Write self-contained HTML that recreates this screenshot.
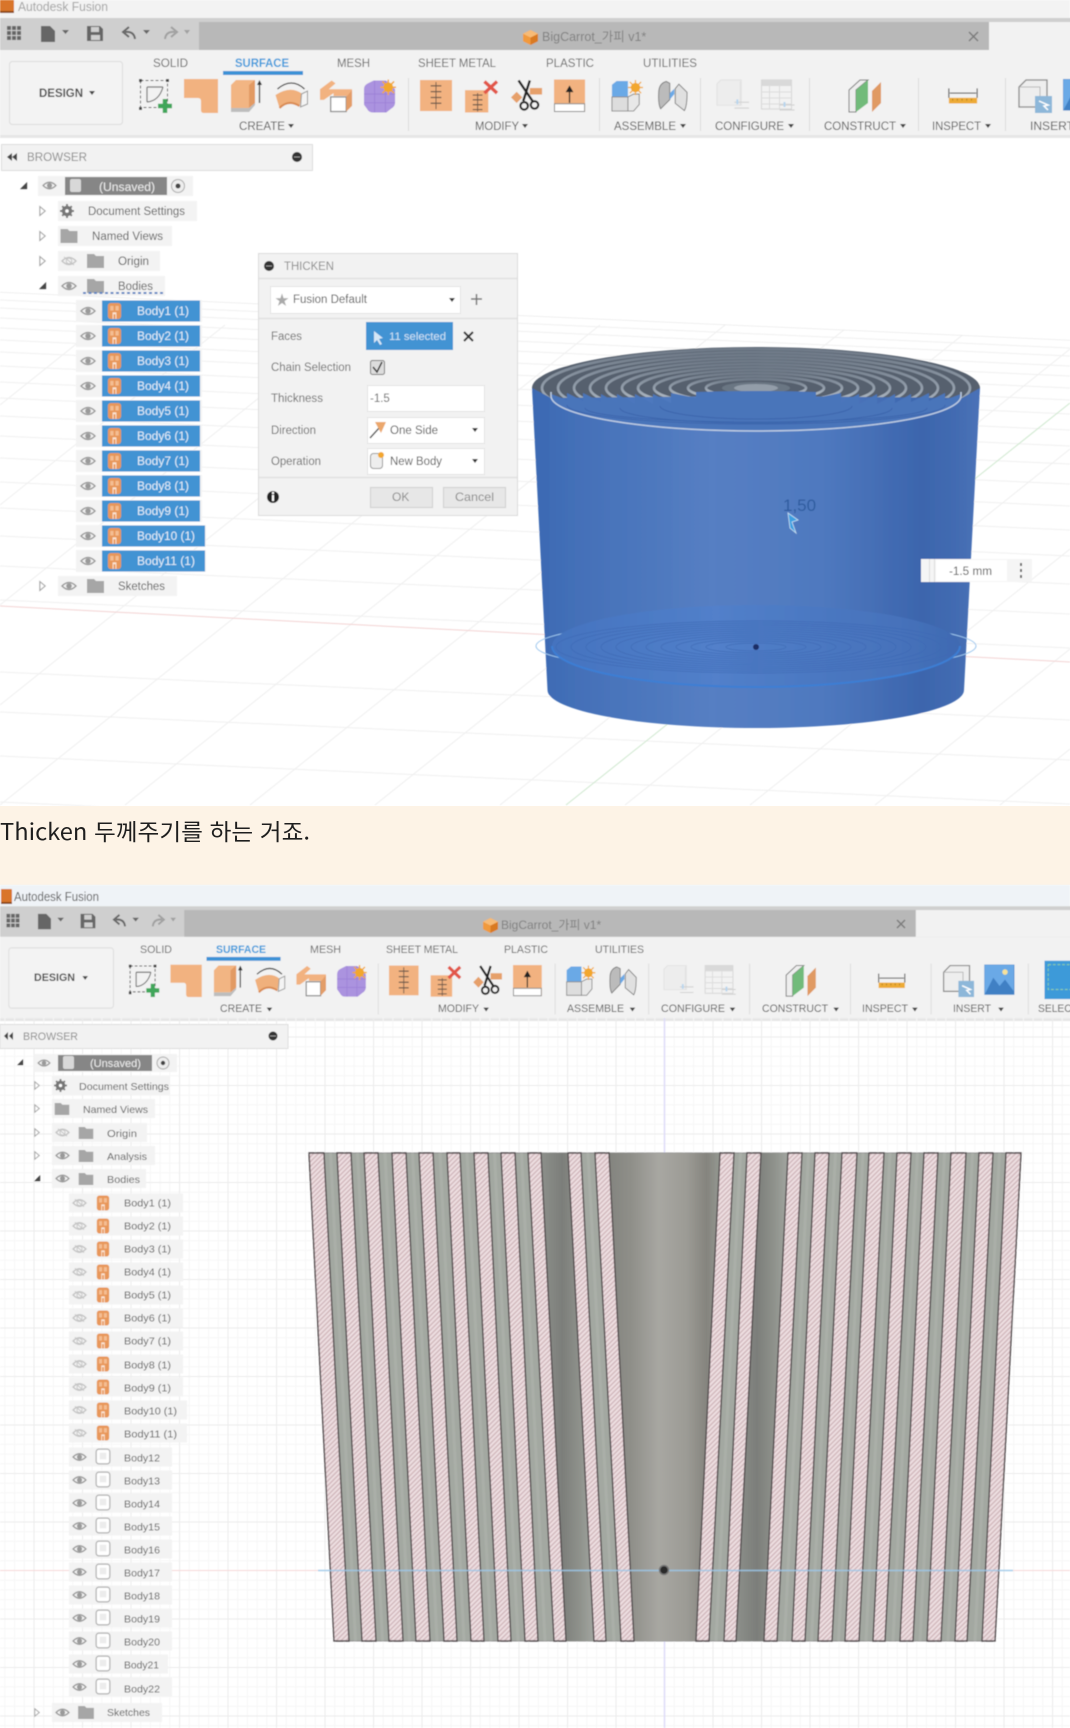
<!DOCTYPE html>
<html lang="ko"><head><meta charset="utf-8"><title>Thicken</title>
<style>
html,body{margin:0;padding:0;background:#fff;width:1070px;height:1728px;overflow:hidden}
svg{display:block}
text{font-family:"Liberation Sans","Noto Sans CJK KR",sans-serif;fill:#666;font-size:12px}
.tab{fill:#686868}.blue{fill:#3a9bdc;font-weight:bold}.grp{fill:#5a5a5a}.w{fill:#e4f0fa;font-size:11.5px}
.tr{fill:#5a5a5a;font-size:11.5px}.dlg{fill:#6c6c6c;font-size:11.5px}.g2{fill:#5a5a5a;font-size:10.5px}
</style></head><body>
<svg xmlns="http://www.w3.org/2000/svg" width="1070" height="1728" viewBox="0 0 1070 1728">
<defs>
<filter id="b" filterUnits="userSpaceOnUse" x="0" y="0" width="1070" height="1728"><feGaussianBlur stdDeviation="0.65"/></filter>
<clipPath id="ground"><path d="M0 292L1070 340V806H0Z"/></clipPath>
<clipPath id="s1"><rect width="1070" height="806"/></clipPath>
<clipPath id="s2"><rect y="1018" width="1070" height="710"/></clipPath>
<clipPath id="topg"><path d="M532 388A224 41 0 0 1 980 388L962 398L756 396L551 398Z"/></clipPath>
<linearGradient id="cy" x1="0" x2="1" y1="0" y2="0"><stop offset="0" stop-color="#3b69b3"/><stop offset=".1" stop-color="#4470b8"/><stop offset=".4" stop-color="#567fc3"/><stop offset=".65" stop-color="#4f79bf"/><stop offset=".87" stop-color="#3c65ad"/><stop offset=".95" stop-color="#436cb2"/><stop offset="1" stop-color="#4a72b8"/></linearGradient>
<linearGradient id="cy2" x1="0" x2="1" y1="0" y2="0"><stop offset="0" stop-color="#4473bf"/><stop offset=".4" stop-color="#5280ca"/><stop offset=".85" stop-color="#4672bb"/><stop offset="1" stop-color="#3f6ab2"/></linearGradient>
<linearGradient id="ring" x1="0" x2="0" y1="0" y2="1"><stop offset="0" stop-color="#6f7a88"/><stop offset=".5" stop-color="#939eab"/><stop offset="1" stop-color="#cad2da"/></linearGradient>
<linearGradient id="gap" x1="0" x2="1" y1="0" y2="0"><stop offset="0" stop-color="#8d908b"/><stop offset=".4" stop-color="#7c7e7a"/><stop offset=".75" stop-color="#90938d"/><stop offset="1" stop-color="#a2a6a0"/></linearGradient>
<linearGradient id="bore" x1="0" x2="1" y1="0" y2="0"><stop offset="0" stop-color="#83847f"/><stop offset=".2" stop-color="#8f8f89"/><stop offset=".45" stop-color="#a8a7a2"/><stop offset=".7" stop-color="#9c9b95"/><stop offset=".88" stop-color="#85847e"/><stop offset="1" stop-color="#959992"/></linearGradient>
<pattern id="hatch" width="3.4" height="3.4" patternUnits="userSpaceOnUse" patternTransform="rotate(-45)"><rect width="3.4" height="3.4" fill="#e6d3d6"/><rect width="3.4" height="1" fill="#cdb3b8"/><rect y="1.7" width="3.4" height=".8" fill="#f3e8ea"/></pattern>
<pattern id="gmin" x="664" y="1570" width="9.7" height="9.7" patternUnits="userSpaceOnUse"><path d="M0 .5H9.7M.5 0V9.7" stroke="#f6f6f6" fill="none"/></pattern>
<pattern id="gmaj" x="664" y="1570" width="48.5" height="48.5" patternUnits="userSpaceOnUse"><path d="M0 .5H48.5M.5 0V48.5" stroke="#ebebeb" fill="none"/></pattern>

<symbol id="sk" viewBox="0 0 34 34"><rect x="1.5" y="1.5" width="27" height="27" fill="none" stroke="#555" stroke-dasharray="3 2"/><path d="M8 8H24M8 8V23M8 23Q20 22 24 8" fill="none" stroke="#777" stroke-width="1.2"/><rect y="0" width="3" height="3" fill="#444"/><rect x="27" width="3" height="3" fill="#444"/><rect y="28" width="3" height="3" fill="#444"/><path d="M26 20V34M19 27H33" stroke="#3fa65a" stroke-width="4.5"/></symbol>
<symbol id="su" viewBox="0 0 34 34"><path d="M0 0H34V34H20Q17 34 17 31V22Q17 19 14 19H0Z" fill="#f2b280"/></symbol>
<symbol id="ex" viewBox="0 0 34 34"><path d="M1 6L6 1H25V24L19 29H1Z" fill="#f2b583"/><path d="M19 6L25 1V24L19 29Z" fill="#e29a64"/><path d="M1 29H19L25 24V26L19 33H1Z" fill="#bdbdbd"/><path d="M29.500 4V24" stroke="#444" stroke-width="1.300"/><path d="M27 6L29.500 1L32 6Z" fill="#333"/></symbol>
<symbol id="sw" viewBox="0 0 34 34"><path d="M3 10Q17 -2 30 10" fill="none" stroke="#444" stroke-width="1.300"/><path d="M1 16Q16 6 28 15L25 27Q14 20 5 29Z" fill="#f0b07c"/><path d="M5 29Q14 20 25 27" fill="none" stroke="#d98b52" stroke-width="2"/><path d="M27 15L33 12V25L26 28Z" fill="#f4f4f4" stroke="#999"/></symbol>
<symbol id="pa" viewBox="0 0 34 34"><path d="M0 10L12 1L16 4L9 10H33V27L27 33V17H14V14L4 21H0Z" fill="#f2b280"/><rect x="11" y="18" width="16" height="15" fill="#fff" stroke="#8a8a8a" stroke-width="1.300"/><path d="M27 18L33 11V27L27 33Z" fill="#e39d68"/></symbol>
<symbol id="pu" viewBox="0 0 34 34"><path d="M10 1H20Q24 1 27 4L32 10V24Q32 28 28 30L23 34H9Q5 34 3 30L0 26V10Q0 6 4 4Z" fill="#ab93df"/><path d="M0 15H32M0 24H32M11 1V34M22 1V34" stroke="#9b80d6" stroke-width=".8"/><circle cx="25" cy="8" r="5" fill="#f2a72e"/><path d="M25 0V16M17 8H33M19 2L31 14M31 2L19 14" stroke="#f2a72e" stroke-width="1.500"/></symbol>
<symbol id="m1" viewBox="0 0 34 34"><rect width="33" height="32" fill="#f2b280"/><path d="M11 6H22M11 12H22M11 18H22M11 24H22" stroke="#6e5a4c" stroke-width="1.300"/><path d="M16.500 2V30" stroke="#6e5a4c" stroke-width="1"/></symbol>
<symbol id="m2" viewBox="0 0 34 34"><rect y="11" width="24" height="23" fill="#f2b280"/><path d="M8 16H18M8 21H18M8 26H18M8 31H18" stroke="#6e5a4c" stroke-width="1.200"/><path d="M13 14V33" stroke="#6e5a4c"/><path d="M20 2L33 14M33 2L20 14" stroke="#e2574a" stroke-width="3.500"/></symbol>
<symbol id="sc" viewBox="0 0 34 34"><path d="M0 19L6 13L12 19L6 25Z" fill="#e6a06a"/><rect x="20" y="9" width="13" height="7" fill="#e6a06a"/><path d="M8 1L23 23M20 1L13 23" stroke="#222" stroke-width="2.600"/><circle cx="25" cy="27" r="4" fill="none" stroke="#222" stroke-width="2.300"/><circle cx="14" cy="28" r="4" fill="none" stroke="#222" stroke-width="2.300"/></symbol>
<symbol id="th" viewBox="0 0 34 34"><rect width="32" height="33" fill="#f2b280"/><rect x=".5" y="25" width="31" height="8" fill="#fff" stroke="#888"/><path d="M16 8V24" stroke="#222" stroke-width="1.300"/><path d="M12 13L16 6L20 13Z" fill="#222"/></symbol>
<symbol id="a1" viewBox="0 0 34 34"><path d="M1 5L6 1H18V18H1Z" fill="#6aa9e6"/><path d="M1 18H18V33H1Z" fill="#ddd" stroke="#888"/><path d="M18 18L24 15H30V26L24 33H18Z" fill="#e8e8e8" stroke="#888"/><circle cx="26" cy="8" r="5" fill="#f2a72e"/><path d="M26 0V16M18 8H34M20 2L32 14M32 2L20 14" stroke="#f2a72e" stroke-width="1.300"/></symbol>
<symbol id="a2" viewBox="0 0 34 34"><path d="M2 11Q3 3 10 1L14 3V21L4 31Q1 26 2 11Z" fill="#bbb" stroke="#777"/><path d="M33 13L24 4L20 9V25L30 33Q33 28 33 13Z" fill="#e0e0e0" stroke="#777"/><path d="M14 14L19 9V15L14 21Z" fill="#6aa9e6"/></symbol>
<symbol id="c1" viewBox="0 0 34 34"><path d="M1 5L5 1H26V27H1Z" fill="#ededed" stroke="#e2e2e2"/><path d="M25 2V27" stroke="#e0e0e0"/><path d="M19 24H34M19 30H34" stroke="#cfcfcf"/><path d="M22 21V26" stroke="#b7d5ee" stroke-width="2"/></symbol>
<symbol id="c2" viewBox="0 0 34 34"><rect x="1" y="1" width="30" height="29" fill="#f2f2f2" stroke="#d6d6d6"/><rect x="1" y="1" width="30" height="6" fill="#d9d9d9"/><path d="M1 13H31M1 19H31M1 25H31M9 7V30M19 7V30" stroke="#dcdcdc"/><path d="M19 26H34M19 31H34" stroke="#cfcfcf"/><path d="M24 23V28" stroke="#b7d5ee" stroke-width="2"/></symbol>
<symbol id="co" viewBox="0 0 34 34"><path d="M1 11L12 1H20V1L8 11V33H1Z" fill="#eee" stroke="#777"/><path d="M8 11L20 1V24L8 33Z" fill="#71bb7a"/><path d="M24 12L33 3V24L24 33Z" fill="#e09a64"/></symbol>
<symbol id="in" viewBox="0 0 34 34"><path d="M2 10V20M32 10V20M3 15H31" stroke="#555" stroke-width="1.200"/><rect x="2" y="20" width="30" height="6" fill="#edab35"/><path d="M6 21V23M11 21V23M16 21V23M21 21V23M26 21V23" stroke="#b07e22"/></symbol>
<symbol id="i1" viewBox="0 0 34 34"><path d="M1 8L8 1H29V28H1Z" fill="#eee" stroke="#888" stroke-width="1.300"/><path d="M1 8H22V28" fill="none" stroke="#aaa" stroke-width=".8"/><rect x="17" y="17" width="17" height="17" fill="#8db7d9"/><path d="M21 22L30 26L26 27L30 31" stroke="#fff" stroke-width="1.500" fill="none"/></symbol>
<symbol id="i2" viewBox="0 0 34 34"><rect width="33" height="32" fill="#6aa9e6" stroke="#4d8fcf"/><path d="M1 31L10 14L17 23L23 16L33 29V32H1Z" fill="#3f80c4"/><circle cx="23" cy="8" r="3" fill="#f6e29a"/></symbol>

<symbol id="eye" viewBox="-8 -6 16 12"><path d="M-7 0Q0 -7 7 0Q0 7 -7 0Z" fill="none" stroke="#9a9a9a" stroke-width="1.500"/><circle r="2.800" fill="#9a9a9a"/></symbol>
<symbol id="eyo" viewBox="-8 -6 16 12"><path d="M-7 0Q0 -7 7 0Q0 7 -7 0Z" fill="none" stroke="#c4c4c4" stroke-width="1.500"/><circle r="2.800" fill="none" stroke="#c4c4c4"/><path d="M-5 -4L5 4" stroke="#c4c4c4"/></symbol>
<symbol id="body" viewBox="0 0 14 17"><rect width="14" height="17" rx="3" fill="#e8975a"/><path d="M5 17V10H9V17H8V12H6V17Z" fill="#fbe6d6"/><path d="M2.500 3H6V8H2.500ZM8 3H11.500V8H8Z" fill="#f4bd92"/></symbol>
<symbol id="bw" viewBox="0 0 16 17"><rect x=".7" y=".7" width="14.600" height="15.600" rx="3" fill="#fff" stroke="#b0b0b0" stroke-width="1.300"/><rect x="4.500" y="4.500" width="7" height="7" fill="#ececec"/></symbol>
<symbol id="fold" viewBox="0 0 17 14"><path d="M0 0H7L9 2H17V14H0Z" fill="#a6a6a6"/></symbol>
<symbol id="gear" viewBox="-8 -8 16 16"><circle r="4.500" fill="none" stroke="#777" stroke-width="3"/><path d="M0 -8V8M-8 0H8M-5.500 -5.500L5.500 5.500M5.500 -5.500L-5.500 5.500" stroke="#777" stroke-width="2.200"/><circle r="2" fill="#fff"/></symbol>
<symbol id="tc" viewBox="0 0 8 12"><path d="M1 1L7 6L1 11Z" fill="#fff" stroke="#a5a5a5" stroke-width="1.300"/></symbol>
<symbol id="to" viewBox="0 0 9 9"><path d="M8 0V8H0Z" fill="#444"/></symbol>
<symbol id="cube" viewBox="0 0 14 14"><path d="M7 0L14 3.500V10.500L7 14L0 10.500V3.500Z" fill="#f19a3e"/><path d="M7 7L14 3.500V10.500L7 14Z" fill="#d97a24"/><path d="M0 3.500L7 0L14 3.500L7 7Z" fill="#f7bb77"/></symbol>

<g id="rib">
<rect y="18" width="1160" height="32" fill="#cfcfcf"/>
<rect x="199" y="22" width="790" height="28" fill="#b8b8b8"/>
<rect x="989" y="22" width="171" height="28" fill="#f2f2f2"/>
<rect y="50" width="1160" height="85" fill="#f2f2f2"/>
<rect y="135" width="1160" height="3" fill="#e6e6e6"/>
<g transform="translate(0 -1)">
<path d="M7 27h4v4h-4zM12 27h4v4h-4zM17 27h4v4h-4zM7 32h4v4h-4zM12 32h4v4h-4zM17 32h4v4h-4zM7 37h4v4h-4zM12 37h4v4h-4zM17 37h4v4h-4z" fill="#666"/>
<path d="M41 27H50L55 32V43H41Z" fill="#666"/><path d="M62 31h7l-3.500 4z" fill="#666"/>
<path d="M87 27H100L103 30V42H87Z" fill="#666"/><rect x="91" y="28" width="8" height="5" fill="#cfcfcf"/><rect x="91" y="36" width="9" height="5" fill="#cfcfcf"/>
<path d="M135 40Q134 32 125 33M129 28L123 33L129 38" fill="none" stroke="#666" stroke-width="2"/><path d="M143 31h7l-3.500 4z" fill="#666"/>
<path d="M165 40Q166 32 175 33M171 28L177 33L171 38" fill="none" stroke="#a0a0a0" stroke-width="2"/><path d="M184 31h6l-3 4z" fill="#a0a0a0"/>
</g>
<rect x="223" y="71" width="80" height="4" fill="#3d92d6"/>
<rect x="9.500" y="61.500" width="113" height="63" rx="3" fill="#f3f3f3" stroke="#dcdcdc"/>
<use href="#sk" x="139" y="79" width="34" height="34"/><use href="#su" x="184" y="79" width="34" height="34"/><use href="#ex" x="230" y="79" width="34" height="34"/><use href="#sw" x="274" y="79" width="35" height="34"/><use href="#pa" x="320" y="79" width="33" height="34"/><use href="#pu" x="364" y="79" width="33" height="34"/>
<use href="#m1" x="420" y="80" width="33" height="33"/><use href="#m2" x="465" y="79" width="33" height="34"/><use href="#sc" x="511" y="79" width="32" height="33"/><use href="#th" x="554" y="79" width="33" height="34"/>
<use href="#a1" x="611" y="79" width="32" height="34"/><use href="#a2" x="657" y="80" width="31" height="32"/><use href="#c1" x="716" y="79" width="33" height="33"/><use href="#c2" x="760" y="79" width="35" height="34"/>
<use href="#co" x="848" y="79" width="34" height="34"/><use href="#in" x="947" y="79" width="32" height="32"/><use href="#i1" x="1018" y="79" width="34" height="34"/><use href="#i2" x="1063" y="79" width="33" height="33"/>
<rect x="1128" y="75" width="40" height="40" fill="#3c9ad9"/><rect x="1132" y="79" width="30" height="26" fill="none" stroke="#8fd0a0" stroke-dasharray="3 2"/>
<path d="M408.500 78V131M599.500 78V131M700.500 78V131M809.500 78V131M918.500 78V131M1005.500 78V131M1110.500 78V131" stroke="#dcdcdc"/>
<path d="M89 91h6l-3 4zM288 124h6l-3 4zM522 124h6l-3 4zM680 124h6l-3 4zM788 124h6l-3 4zM900 124h6l-3 4zM985 124h6l-3 4zM1078 124h6l-3 4z" fill="#444"/>
</g>
</defs>

<rect width="1070" height="1728" fill="#fff"/>

<!-- SHOT 1 -->
<g filter="url(#b)" clip-path="url(#s1)">
<rect width="1070" height="18" fill="#f3f3f3"/>
<path d="M0 0H14V13H0Z" fill="#d9752c"/><path d="M0 11H14V13H0Z" fill="#8c4a1a"/>
<text x="18" y="11" style="font-size:13px;fill:#a3a3a3" textLength="90" lengthAdjust="spacingAndGlyphs">Autodesk Fusion</text>
<use href="#rib"/>
<use href="#cube" x="523" y="30" width="15" height="15"/>
<text x="542" y="41" style="font-size:12.500px;fill:#808080">BigCarrot_가피 v1*</text>
<path d="M969 32L978 41M978 32L969 41" stroke="#7c7c7c" stroke-width="1.500"/>
<text class="tab" x="153" y="67" textLength="35" lengthAdjust="spacingAndGlyphs">SOLID</text>
<text class="blue" x="235" y="67" textLength="54" lengthAdjust="spacingAndGlyphs">SURFACE</text>
<text class="tab" x="337" y="67" textLength="33" lengthAdjust="spacingAndGlyphs">MESH</text>
<text class="tab" x="418" y="67" textLength="78" lengthAdjust="spacingAndGlyphs">SHEET METAL</text>
<text class="tab" x="546" y="67" textLength="48" lengthAdjust="spacingAndGlyphs">PLASTIC</text>
<text class="tab" x="643" y="67" textLength="54" lengthAdjust="spacingAndGlyphs">UTILITIES</text>
<text x="39" y="97" style="font-weight:bold;fill:#4a4a4a;font-size:11.500px" textLength="44" lengthAdjust="spacingAndGlyphs">DESIGN</text>
<text class="grp" x="239" y="130" textLength="46" lengthAdjust="spacingAndGlyphs">CREATE</text>
<text class="grp" x="475" y="130" textLength="44" lengthAdjust="spacingAndGlyphs">MODIFY</text>
<text class="grp" x="614" y="130" textLength="62" lengthAdjust="spacingAndGlyphs">ASSEMBLE</text>
<text class="grp" x="715" y="130" textLength="69" lengthAdjust="spacingAndGlyphs">CONFIGURE</text>
<text class="grp" x="824" y="130" textLength="72" lengthAdjust="spacingAndGlyphs">CONSTRUCT</text>
<text class="grp" x="932" y="130" textLength="49" lengthAdjust="spacingAndGlyphs">INSPECT</text>
<text class="grp" x="1030" y="130" textLength="44" lengthAdjust="spacingAndGlyphs">INSERT</text>

<!-- ground grid -->
<g clip-path="url(#ground)" fill="none">
<path d="M0 300L1070 348M0 308L1070 356M0 318L1070 366M0 328L1070 376M0 340L1070 388M0 352L1070 400M0 366L1070 414M0 382L1070 430M0 398L1070 446M0 416L1070 464M0 436L1070 484M0 458L1070 506M0 482L1070 530M0 508L1070 556M0 536L1070 584M0 566L1070 614M0 600L1070 648M0 672L1070 720M0 712L1070 760M0 756L1070 804M0 802L1070 850" stroke="#f0f0f0"/>
<path d="M-500 805L100 325M-375 805L225 325M-250 805L350 325M-125 805L475 325M0 805L600 325M125 805L725 325M250 805L850 325M375 805L975 325M500 805L1100 325M625 805L1225 325M750 805L1350 325M875 805L1475 325M1000 805L1600 325" stroke="#efefef"/>
<path d="M0 606L1070 662" stroke="#f3d3d3"/>
<path d="M1070 403L566 805" stroke="#cfe8cf"/>
<path d="M0 292L1070 340" stroke="#e2e2e2"/>
</g>

<!-- browser -->
<rect x="1.500" y="144.500" width="311" height="26" fill="#f2f2f2" stroke="#dedede"/>
<path d="M12 153V161L7 157ZM17 153V161L12 157Z" fill="#444"/>
<text x="27" y="161" style="fill:#8a8a8a;font-size:12px" textLength="60" lengthAdjust="spacingAndGlyphs">BROWSER</text>
<circle cx="297" cy="157" r="5" fill="#333"/><path d="M294 157H300" stroke="#999"/>

<use href="#to" x="20" y="182" width="8" height="8"/>
<rect x="38" y="176" width="155" height="20" fill="#f3f3f3"/>
<use href="#eye" x="42" y="180" width="15" height="11"/>
<rect x="65" y="177" width="102" height="18" fill="#868686"/><rect x="70" y="179" width="11" height="13" rx="2" fill="#d8d8d8"/>
<text x="99" y="191" style="fill:#eee;font-size:11.500px" textLength="56" lengthAdjust="spacingAndGlyphs">(Unsaved)</text>
<circle cx="178" cy="186" r="6.500" fill="#eee" stroke="#aaa"/><circle cx="178" cy="186" r="2.500" fill="#444"/>

<rect x="58" y="201" width="139" height="20" fill="#f3f3f3"/><use href="#tc" x="39" y="205" width="7" height="12"/><use href="#gear" x="60" y="204" width="14" height="14"/>
<text class="tr" x="88" y="215" textLength="97" lengthAdjust="spacingAndGlyphs">Document Settings</text>
<rect x="58" y="226" width="114" height="20" fill="#f3f3f3"/><use href="#tc" x="39" y="230" width="7" height="12"/><use href="#fold" x="60" y="229" width="18" height="14"/>
<text class="tr" x="92" y="240" textLength="71" lengthAdjust="spacingAndGlyphs">Named Views</text>
<rect x="58" y="251" width="102" height="20" fill="#f3f3f3"/><use href="#tc" x="39" y="255" width="7" height="12"/><use href="#eyo" x="61" y="255" width="16" height="12"/><use href="#fold" x="87" y="254" width="17" height="14"/>
<text class="tr" x="118" y="265" textLength="31" lengthAdjust="spacingAndGlyphs">Origin</text>
<rect x="58" y="276" width="107" height="20" fill="#f3f3f3"/><use href="#to" x="39" y="282" width="8" height="8"/><use href="#eye" x="61" y="280" width="16" height="12"/><use href="#fold" x="87" y="279" width="17" height="14"/>
<text class="tr" x="118" y="290" textLength="35" lengthAdjust="spacingAndGlyphs">Bodies</text>
<path d="M83 293H163" stroke="#5f86c4" stroke-width="2" stroke-dasharray="3 2.500"/>

<g>
<rect x="76" y="300" width="126" height="22" fill="#f3f3f3"/><rect x="76" y="325" width="126" height="22" fill="#f3f3f3"/><rect x="76" y="350" width="126" height="22" fill="#f3f3f3"/><rect x="76" y="375" width="126" height="22" fill="#f3f3f3"/><rect x="76" y="400" width="126" height="22" fill="#f3f3f3"/><rect x="76" y="425" width="126" height="22" fill="#f3f3f3"/><rect x="76" y="450" width="126" height="22" fill="#f3f3f3"/><rect x="76" y="475" width="126" height="22" fill="#f3f3f3"/><rect x="76" y="500" width="126" height="22" fill="#f3f3f3"/><rect x="76" y="525" width="130" height="22" fill="#f3f3f3"/><rect x="76" y="550" width="130" height="22" fill="#f3f3f3"/>
<path d="M102 300.500h98v21h-98zM102 325.500h98v21h-98zM102 350.500h98v21h-98zM102 375.500h98v21h-98zM102 400.500h98v21h-98zM102 425.500h98v21h-98zM102 450.500h98v21h-98zM102 475.500h98v21h-98zM102 500.500h98v21h-98zM102 525.500h103v21h-103zM102 550.500h103v21h-103z" fill="#4393d3"/>
<use href="#eye" x="80" y="305" width="16" height="12"/><use href="#eye" x="80" y="330" width="16" height="12"/><use href="#eye" x="80" y="355" width="16" height="12"/><use href="#eye" x="80" y="380" width="16" height="12"/><use href="#eye" x="80" y="405" width="16" height="12"/><use href="#eye" x="80" y="430" width="16" height="12"/><use href="#eye" x="80" y="455" width="16" height="12"/><use href="#eye" x="80" y="480" width="16" height="12"/><use href="#eye" x="80" y="505" width="16" height="12"/><use href="#eye" x="80" y="530" width="16" height="12"/><use href="#eye" x="80" y="555" width="16" height="12"/>
<use href="#body" x="107" y="303" width="15" height="16"/><use href="#body" x="107" y="328" width="15" height="16"/><use href="#body" x="107" y="353" width="15" height="16"/><use href="#body" x="107" y="378" width="15" height="16"/><use href="#body" x="107" y="403" width="15" height="16"/><use href="#body" x="107" y="428" width="15" height="16"/><use href="#body" x="107" y="453" width="15" height="16"/><use href="#body" x="107" y="478" width="15" height="16"/><use href="#body" x="107" y="503" width="15" height="16"/><use href="#body" x="107" y="528" width="15" height="16"/><use href="#body" x="107" y="553" width="15" height="16"/>
</g>
<text class="w" x="137" y="315" textLength="52" lengthAdjust="spacingAndGlyphs">Body1 (1)</text>
<text class="w" x="137" y="340" textLength="52" lengthAdjust="spacingAndGlyphs">Body2 (1)</text>
<text class="w" x="137" y="365" textLength="52" lengthAdjust="spacingAndGlyphs">Body3 (1)</text>
<text class="w" x="137" y="390" textLength="52" lengthAdjust="spacingAndGlyphs">Body4 (1)</text>
<text class="w" x="137" y="415" textLength="52" lengthAdjust="spacingAndGlyphs">Body5 (1)</text>
<text class="w" x="137" y="440" textLength="52" lengthAdjust="spacingAndGlyphs">Body6 (1)</text>
<text class="w" x="137" y="465" textLength="52" lengthAdjust="spacingAndGlyphs">Body7 (1)</text>
<text class="w" x="137" y="490" textLength="52" lengthAdjust="spacingAndGlyphs">Body8 (1)</text>
<text class="w" x="137" y="515" textLength="52" lengthAdjust="spacingAndGlyphs">Body9 (1)</text>
<text class="w" x="137" y="540" textLength="58" lengthAdjust="spacingAndGlyphs">Body10 (1)</text>
<text class="w" x="137" y="565" textLength="58" lengthAdjust="spacingAndGlyphs">Body11 (1)</text>
<rect x="58" y="576" width="119" height="20" fill="#f3f3f3"/><use href="#tc" x="39" y="580" width="7" height="12"/><use href="#eye" x="61" y="580" width="16" height="12"/><use href="#fold" x="87" y="579" width="17" height="14"/>
<text class="tr" x="118" y="590" textLength="47" lengthAdjust="spacingAndGlyphs">Sketches</text>

<!-- dialog -->
<rect x="258.500" y="253.500" width="259" height="262" fill="#f2f2f2" stroke="#dcdcdc"/>
<path d="M259 278.500H517M259 318.500H517M259 477.500H517" stroke="#e0e0e0" stroke-width="1.500"/>
<circle cx="269" cy="266" r="5" fill="#333"/><path d="M266 266H272" stroke="#999"/>
<text x="284" y="270" style="fill:#8a8a8a;font-size:11.500px" textLength="50" lengthAdjust="spacingAndGlyphs">THICKEN</text>
<rect x="270.500" y="286.500" width="190" height="27" fill="#fff" stroke="#e4e4e4"/>
<text x="275" y="305" style="font-size:14px;fill:#aaa">★</text>
<text class="dlg" x="293" y="303" style="fill:#555" textLength="74" lengthAdjust="spacingAndGlyphs">Fusion Default</text>
<path d="M449 298h6l-3 4z" fill="#333"/><path d="M471 299H482M476.500 294V305" stroke="#777" stroke-width="1.500"/>
<text class="dlg" x="271" y="340" textLength="31" lengthAdjust="spacingAndGlyphs">Faces</text>
<rect x="366" y="322" width="87" height="28" fill="#4393d3"/>
<path d="M374 331V343L377 340L380 345L382 344L379 339L383 338Z" fill="#d4e6f6"/>
<text class="w" x="389" y="340" style="font-size:11px;fill:#cfe4f6" textLength="57" lengthAdjust="spacingAndGlyphs">11 selected</text>
<path d="M464 332L473 341M473 332L464 341" stroke="#333" stroke-width="2"/>
<text class="dlg" x="271" y="371" textLength="80" lengthAdjust="spacingAndGlyphs">Chain Selection</text>
<rect x="370.500" y="360.500" width="14" height="14" rx="2" fill="#ddd" stroke="#777"/><path d="M373 367L377 372L382 362" fill="none" stroke="#333" stroke-width="1.500"/>
<text class="dlg" x="271" y="402" textLength="52" lengthAdjust="spacingAndGlyphs">Thickness</text>
<rect x="367.500" y="385.500" width="117" height="26" fill="#fff" stroke="#e4e4e4"/>
<text x="370" y="402" style="fill:#666;font-size:11.500px">-1.5</text>
<text class="dlg" x="271" y="434" textLength="45" lengthAdjust="spacingAndGlyphs">Direction</text>
<rect x="367.500" y="417.500" width="117" height="26" fill="#fff" stroke="#e4e4e4"/>
<path d="M370 438L380 427" stroke="#555" stroke-width="1.500"/><path d="M375 422H386L381 433Z" fill="#eba76c"/>
<text class="dlg" x="390" y="434" style="fill:#555" textLength="48" lengthAdjust="spacingAndGlyphs">One Side</text>
<path d="M472 428h6l-3 4z" fill="#333"/>
<text class="dlg" x="271" y="465" textLength="50" lengthAdjust="spacingAndGlyphs">Operation</text>
<rect x="367.500" y="448.500" width="117" height="26" fill="#fff" stroke="#e4e4e4"/>
<rect x="370.500" y="453.500" width="12" height="15" rx="3" fill="#eee" stroke="#999"/><circle cx="381" cy="455" r="3" fill="#f2a72e"/>
<text class="dlg" x="390" y="465" style="fill:#555" textLength="52" lengthAdjust="spacingAndGlyphs">New Body</text>
<path d="M472 459h6l-3 4z" fill="#333"/>
<circle cx="273" cy="497" r="6" fill="#222"/><rect x="272" y="495" width="2" height="6" fill="#fff"/><rect x="272" y="492" width="2" height="2" fill="#fff"/>
<rect x="370.500" y="487.500" width="62" height="20" fill="#e7e7e7" stroke="#cfcfcf"/>
<text x="392" y="501" style="fill:#8a8a8a">OK</text>
<rect x="443.500" y="487.500" width="62" height="20" fill="#e7e7e7" stroke="#cfcfcf"/>
<text x="455" y="501" style="fill:#8a8a8a" textLength="39" lengthAdjust="spacingAndGlyphs">Cancel</text>

<!-- cylinder -->
<path d="M532 388L547.500 690A208.250 38 0 0 0 964 690L980 388Z" fill="url(#cy)"/>
<ellipse cx="756" cy="646" rx="220" ry="26" fill="none" stroke="#9cc6ee"/>
<path d="M552 646A204 41 0 0 1 960 646A204 41 0 0 1 552 646Z" fill="url(#cy2)"/>
<path d="M552 646A204 41 0 0 0 960 646" fill="none" stroke="#3e7ed4" stroke-width="2"/>
<g fill="none" stroke="#3f6ab5" stroke-width=".9" opacity=".75">
<ellipse cx="756" cy="647" rx="200" ry="26"/><ellipse cx="756" cy="647" rx="185" ry="24"/><ellipse cx="756" cy="647" rx="170" ry="22"/><ellipse cx="756" cy="647" rx="155" ry="20"/><ellipse cx="756" cy="647" rx="140" ry="18"/><ellipse cx="756" cy="647" rx="125" ry="16"/><ellipse cx="756" cy="647" rx="110" ry="14"/><ellipse cx="756" cy="647" rx="95" ry="12"/><ellipse cx="756" cy="647" rx="80" ry="10"/><ellipse cx="756" cy="647" rx="65" ry="8"/><ellipse cx="756" cy="647" rx="50" ry="6"/><ellipse cx="756" cy="647" rx="30" ry="4"/>
</g>
<circle cx="756" cy="647" r="3" fill="#1e2f66"/>
<g clip-path="url(#topg)">
<rect x="530" y="345" width="452" height="55" fill="#56616e"/>
<g fill="none" stroke="url(#ring)" stroke-width="2.600">
<ellipse cx="756" cy="388" rx="214" ry="39"/><ellipse cx="756" cy="388" rx="198" ry="36"/><ellipse cx="756" cy="388" rx="182" ry="33"/><ellipse cx="756" cy="388" rx="166" ry="30"/><ellipse cx="756" cy="388" rx="150" ry="27"/><ellipse cx="756" cy="388" rx="134" ry="24"/><ellipse cx="756" cy="388" rx="118" ry="21"/><ellipse cx="756" cy="388" rx="102" ry="18"/><ellipse cx="756" cy="388" rx="86" ry="15"/><ellipse cx="756" cy="388" rx="68" ry="12"/><ellipse cx="756" cy="388" rx="50" ry="9"/>
</g>
<ellipse cx="756" cy="388" rx="34" ry="6" fill="#6b7683"/>
<ellipse cx="756" cy="388" rx="22" ry="4" fill="#939da9"/>
</g>
<path d="M551 394L567 400V393L583 401V393L601 402V394L617 403V394L635 404V394L653 404V394L671 403V393L696 398V392Q756 390 816 392V398L841 393V403L859 394V404L877 394V404L895 394V403L911 394V402L929 393V401L945 393V400L961 394V395A205 35 0 0 1 551 395Z" fill="#4a74ba"/>
<g fill="none" stroke="#3a64ab" stroke-width=".8">
<path d="M567 405A189 19 0 0 0 945 405"/><path d="M585 408A171 14 0 0 0 927 408"/><path d="M620 408A136 15 0 0 0 892 408"/><path d="M660 406A96 13 0 0 0 852 406"/>
</g>
<path d="M551 392V396A205 35 0 0 0 961 396V392" fill="none" stroke="#bccbe2" stroke-width="1.500"/>
<text x="783" y="511" style="font-size:17px;fill:#2f5c9f">1,50</text>
<path d="M788 513L790 528L796 533L792 522L798 520Z" fill="#3ca0e2" stroke="#c7dff2" stroke-width=".8"/>
<rect x="921" y="559" width="111" height="23" fill="#f5f5f5"/><rect x="936" y="560" width="71" height="21" fill="#fff"/>
<path d="M929.500 559V582M934.500 559V582" stroke="#ddd"/>
<text x="949" y="575" style="font-size:12px;fill:#555" textLength="43" lengthAdjust="spacingAndGlyphs">-1.5 mm</text>
<path d="M1021 563v3M1021 569v3M1021 575v3" stroke="#666" stroke-width="2"/>
</g>

<!-- CAPTION -->
<rect y="806" width="1070" height="79" fill="#fdf3e6"/>
<text x="0" y="840" style="font-family:'Noto Sans CJK KR','Liberation Sans',sans-serif;font-size:23px;fill:#1e1e1e" textLength="310" lengthAdjust="spacingAndGlyphs">Thicken 두께주기를 하는 거죠.</text>

<!-- SHOT 2 -->
<g filter="url(#b)">
<rect y="885" width="1070" height="21" fill="#eff3f7"/>
<path d="M1 889H11Q12 889 12 890V904H1Z" fill="#d9752c"/><path d="M1 902H12V904H1Z" fill="#8c4a1a"/>
<text x="14" y="901" style="font-size:12.500px;fill:#5a5a5a" textLength="85" lengthAdjust="spacingAndGlyphs">Autodesk Fusion</text>
<use href="#rib" transform="translate(0 889) scale(.926 .957)"/>
<use href="#cube" x="483" y="918" width="15" height="15"/>
<text x="501" y="929" style="font-size:12px;fill:#808080">BigCarrot_가피 v1*</text>
<path d="M897 920L905 928M905 920L897 928" stroke="#7c7c7c" stroke-width="1.500"/>
<text class="tab" x="140" y="953" style="font-size:11px" textLength="32" lengthAdjust="spacingAndGlyphs">SOLID</text>
<text class="blue" x="216" y="953" style="font-size:11px" textLength="50" lengthAdjust="spacingAndGlyphs">SURFACE</text>
<text class="tab" x="310" y="953" style="font-size:11px" textLength="31" lengthAdjust="spacingAndGlyphs">MESH</text>
<text class="tab" x="386" y="953" style="font-size:11px" textLength="72" lengthAdjust="spacingAndGlyphs">SHEET METAL</text>
<text class="tab" x="504" y="953" style="font-size:11px" textLength="44" lengthAdjust="spacingAndGlyphs">PLASTIC</text>
<text class="tab" x="595" y="953" style="font-size:11px" textLength="49" lengthAdjust="spacingAndGlyphs">UTILITIES</text>
<text x="34" y="981" style="font-weight:bold;fill:#4a4a4a;font-size:11px" textLength="41" lengthAdjust="spacingAndGlyphs">DESIGN</text>
<text class="grp" x="220" y="1012" style="font-size:11px" textLength="42" lengthAdjust="spacingAndGlyphs">CREATE</text>
<text class="grp" x="438" y="1012" style="font-size:11px" textLength="41" lengthAdjust="spacingAndGlyphs">MODIFY</text>
<text class="grp" x="567" y="1012" style="font-size:11px" textLength="57" lengthAdjust="spacingAndGlyphs">ASSEMBLE</text>
<text class="grp" x="661" y="1012" style="font-size:11px" textLength="64" lengthAdjust="spacingAndGlyphs">CONFIGURE</text>
<text class="grp" x="762" y="1012" style="font-size:11px" textLength="66" lengthAdjust="spacingAndGlyphs">CONSTRUCT</text>
<text class="grp" x="862" y="1012" style="font-size:11px" textLength="46" lengthAdjust="spacingAndGlyphs">INSPECT</text>
<text class="grp" x="953" y="1012" style="font-size:11px" textLength="38" lengthAdjust="spacingAndGlyphs">INSERT</text>
<text class="grp" x="1038" y="1012" style="font-size:11px" textLength="40" lengthAdjust="spacingAndGlyphs">SELECT</text>

<g clip-path="url(#s2)">
<rect y="1018" width="1070" height="710" fill="url(#gmin)"/>
<rect y="1018" width="1070" height="710" fill="url(#gmaj)"/>
<path d="M0 1570.500H318M1013 1570.500H1070" stroke="#f6d8d8"/>
<path d="M664.500 1018V1153M664.500 1641V1728" stroke="#dedcf8" stroke-width="1.500"/>

<!-- section -->
<path d="M309 1153H1021L995 1641H334Z" fill="#a3a8a1" stroke="#8f8f8f"/>
<path d="M541 1153H568L594 1641H566Z" fill="url(#gap)"/>
<path d="M761 1153H788L764 1641H736Z" fill="url(#gap)"/>
<path d="M609 1153H720L696 1641H634Z" fill="url(#bore)"/>
<path d="M330.500 1153L355.500 1641M357.500 1153L382.500 1641M385 1153L409.500 1641M412.500 1153L437 1641M440 1153L464 1641M467 1153L491 1641M494.500 1153L518 1641M521.500 1153L545 1641M588 1153L614 1641M740.500 1153L716 1641M808.500 1153L784.500 1641M835.500 1153L811.500 1641M863 1153L838.500 1641M890 1153L866 1641M917.500 1153L893 1641M944.500 1153L920 1641M972.500 1153L948 1641M999.500 1153L975 1641" stroke="#b4b9b2" stroke-width="3" opacity=".45" fill="none"/>
<path d="M309 1153H324L349 1641H334ZM337 1153H351L376 1641H362ZM364 1153H378L403 1641H389ZM392 1153H406L430 1641H416ZM419 1153H433L457 1641H444ZM447 1153H460L484 1641H471ZM474 1153H488L511 1641H498ZM501 1153H515L538 1641H525ZM528 1153H541L566 1641H554ZM568 1153H581L606 1641H594ZM595 1153H609L634 1641H621ZM720 1153H734L709 1641H696ZM747 1153H761L736 1641H724ZM788 1153H802L777 1641H764ZM815 1153H829L805 1641H792ZM842 1153H857L832 1641H818ZM869 1153H884L859 1641H845ZM897 1153H911L885 1641H873ZM924 1153H938L913 1641H900ZM951 1153H966L941 1641H927ZM979 1153H993L967 1641H955ZM1006 1153H1021L995 1641H982Z" fill="url(#hatch)" stroke="#4f494b" stroke-width="1.400"/>
<path d="M318 1570.500H1013" stroke="#9cc8ea" stroke-width="1.500" opacity=".85"/>
<circle cx="664" cy="1570" r="4.500" fill="#2b2b2b" stroke="#777" stroke-width="1.500"/>
</g>

<!-- browser 2 -->
<rect x="0" y="1024.500" width="288" height="24" fill="#f2f2f2" stroke="#dedede"/>
<path d="M8 1032V1040L4 1036ZM13 1032V1040L9 1036Z" fill="#444"/>
<text x="23" y="1040" style="fill:#8a8a8a;font-size:11px" textLength="55" lengthAdjust="spacingAndGlyphs">BROWSER</text>
<circle cx="273" cy="1036" r="4.500" fill="#333"/><path d="M270 1036H276" stroke="#999"/>

<use href="#to" x="17" y="1059" width="7" height="7"/>
<rect x="34" y="1054" width="143" height="18" fill="#f3f3f3"/>
<use href="#eye" x="37" y="1058" width="14" height="10"/>
<rect x="58" y="1055" width="94" height="16" fill="#868686"/><rect x="63" y="1056" width="11" height="13" rx="2" fill="#d8d8d8"/>
<text x="90" y="1067" style="fill:#eee;font-size:11px" textLength="51" lengthAdjust="spacingAndGlyphs">(Unsaved)</text>
<circle cx="163" cy="1063" r="6" fill="#eee" stroke="#aaa"/><circle cx="163" cy="1063" r="2.200" fill="#444"/>

<g transform="translate(0 -1)">
<rect x="52" y="1077" width="118" height="19" fill="#f3f3f3"/><use href="#tc" x="34" y="1081" width="6" height="11"/><use href="#gear" x="54" y="1080" width="13" height="13"/>
<text class="g2" x="79" y="1091" textLength="90" lengthAdjust="spacingAndGlyphs">Document Settings</text>
<rect x="52" y="1100" width="103" height="19" fill="#f3f3f3"/><use href="#tc" x="34" y="1104" width="6" height="11"/><use href="#fold" x="54" y="1104" width="16" height="12"/>
<text class="g2" x="83" y="1114" textLength="65" lengthAdjust="spacingAndGlyphs">Named Views</text>
<rect x="52" y="1124" width="95" height="19" fill="#f3f3f3"/><use href="#tc" x="34" y="1128" width="6" height="11"/><use href="#eyo" x="55" y="1128" width="15" height="11"/><use href="#fold" x="78" y="1128" width="16" height="12"/>
<text class="g2" x="107" y="1138" textLength="30" lengthAdjust="spacingAndGlyphs">Origin</text>
<rect x="52" y="1147" width="103" height="19" fill="#f3f3f3"/><use href="#tc" x="34" y="1151" width="6" height="11"/><use href="#eye" x="55" y="1151" width="15" height="11"/><use href="#fold" x="78" y="1151" width="16" height="12"/>
<text class="g2" x="107" y="1161" textLength="40" lengthAdjust="spacingAndGlyphs">Analysis</text>
<rect x="52" y="1170" width="94" height="19" fill="#f3f3f3"/><use href="#to" x="34" y="1176" width="7" height="7"/><use href="#eye" x="55" y="1174" width="15" height="11"/><use href="#fold" x="78" y="1174" width="16" height="12"/>
<text class="g2" x="107" y="1184" textLength="33" lengthAdjust="spacingAndGlyphs">Bodies</text>
</g>

<g transform="translate(0 -.5)">
<path d="M69 1194h114v19H69zM69 1217h114v19H69zM69 1240h114v19H69zM69 1263h114v19H69zM69 1286h114v19H69zM69 1309h114v19H69zM69 1332h114v19H69zM69 1355h114v19H69zM69 1378h114v19H69zM69 1401h118v19H69zM69 1424h118v19H69zM69 1448h103v19H69zM69 1471h103v19H69zM69 1494h103v19H69zM69 1517h103v19H69zM69 1540h103v19H69zM69 1563h103v19H69zM69 1586h103v19H69zM69 1609h103v19H69zM69 1632h103v19H69zM69 1655h99v19H69zM69 1678h103v19H69z" fill="#f3f3f3"/>
<use href="#eyo" x="72" y="1198" width="15" height="11"/><use href="#eyo" x="72" y="1221" width="15" height="11"/><use href="#eyo" x="72" y="1244" width="15" height="11"/><use href="#eyo" x="72" y="1267" width="15" height="11"/><use href="#eyo" x="72" y="1290" width="15" height="11"/><use href="#eyo" x="72" y="1313" width="15" height="11"/><use href="#eyo" x="72" y="1336" width="15" height="11"/><use href="#eyo" x="72" y="1359" width="15" height="11"/><use href="#eyo" x="72" y="1382" width="15" height="11"/><use href="#eyo" x="72" y="1405" width="15" height="11"/><use href="#eyo" x="72" y="1428" width="15" height="11"/>
<use href="#body" x="96" y="1196" width="14" height="15"/><use href="#body" x="96" y="1219" width="14" height="15"/><use href="#body" x="96" y="1242" width="14" height="15"/><use href="#body" x="96" y="1265" width="14" height="15"/><use href="#body" x="96" y="1288" width="14" height="15"/><use href="#body" x="96" y="1311" width="14" height="15"/><use href="#body" x="96" y="1334" width="14" height="15"/><use href="#body" x="96" y="1357" width="14" height="15"/><use href="#body" x="96" y="1380" width="14" height="15"/><use href="#body" x="96" y="1403" width="14" height="15"/><use href="#body" x="96" y="1426" width="14" height="15"/>
<use href="#eye" x="72" y="1452" width="15" height="11"/><use href="#eye" x="72" y="1475" width="15" height="11"/><use href="#eye" x="72" y="1498" width="15" height="11"/><use href="#eye" x="72" y="1521" width="15" height="11"/><use href="#eye" x="72" y="1544" width="15" height="11"/><use href="#eye" x="72" y="1567" width="15" height="11"/><use href="#eye" x="72" y="1590" width="15" height="11"/><use href="#eye" x="72" y="1613" width="15" height="11"/><use href="#eye" x="72" y="1636" width="15" height="11"/><use href="#eye" x="72" y="1659" width="15" height="11"/><use href="#eye" x="72" y="1682" width="15" height="11"/>
<use href="#bw" x="95" y="1449" width="16" height="16"/><use href="#bw" x="95" y="1472" width="16" height="16"/><use href="#bw" x="95" y="1495" width="16" height="16"/><use href="#bw" x="95" y="1518" width="16" height="16"/><use href="#bw" x="95" y="1541" width="16" height="16"/><use href="#bw" x="95" y="1564" width="16" height="16"/><use href="#bw" x="95" y="1587" width="16" height="16"/><use href="#bw" x="95" y="1610" width="16" height="16"/><use href="#bw" x="95" y="1633" width="16" height="16"/><use href="#bw" x="95" y="1656" width="16" height="16"/><use href="#bw" x="95" y="1679" width="16" height="16"/>
<text class="g2" x="124" y="1207" textLength="47" lengthAdjust="spacingAndGlyphs">Body1 (1)</text>
<text class="g2" x="124" y="1230" textLength="47" lengthAdjust="spacingAndGlyphs">Body2 (1)</text>
<text class="g2" x="124" y="1253" textLength="47" lengthAdjust="spacingAndGlyphs">Body3 (1)</text>
<text class="g2" x="124" y="1276" textLength="47" lengthAdjust="spacingAndGlyphs">Body4 (1)</text>
<text class="g2" x="124" y="1299" textLength="47" lengthAdjust="spacingAndGlyphs">Body5 (1)</text>
<text class="g2" x="124" y="1322" textLength="47" lengthAdjust="spacingAndGlyphs">Body6 (1)</text>
<text class="g2" x="124" y="1345" textLength="47" lengthAdjust="spacingAndGlyphs">Body7 (1)</text>
<text class="g2" x="124" y="1369" textLength="47" lengthAdjust="spacingAndGlyphs">Body8 (1)</text>
<text class="g2" x="124" y="1392" textLength="47" lengthAdjust="spacingAndGlyphs">Body9 (1)</text>
<text class="g2" x="124" y="1415" textLength="53" lengthAdjust="spacingAndGlyphs">Body10 (1)</text>
<text class="g2" x="124" y="1438" textLength="53" lengthAdjust="spacingAndGlyphs">Body11 (1)</text>
<text class="g2" x="124" y="1462" textLength="36" lengthAdjust="spacingAndGlyphs">Body12</text>
<text class="g2" x="124" y="1485" textLength="36" lengthAdjust="spacingAndGlyphs">Body13</text>
<text class="g2" x="124" y="1508" textLength="36" lengthAdjust="spacingAndGlyphs">Body14</text>
<text class="g2" x="124" y="1531" textLength="36" lengthAdjust="spacingAndGlyphs">Body15</text>
<text class="g2" x="124" y="1554" textLength="36" lengthAdjust="spacingAndGlyphs">Body16</text>
<text class="g2" x="124" y="1577" textLength="36" lengthAdjust="spacingAndGlyphs">Body17</text>
<text class="g2" x="124" y="1600" textLength="36" lengthAdjust="spacingAndGlyphs">Body18</text>
<text class="g2" x="124" y="1623" textLength="36" lengthAdjust="spacingAndGlyphs">Body19</text>
<text class="g2" x="124" y="1646" textLength="36" lengthAdjust="spacingAndGlyphs">Body20</text>
<text class="g2" x="124" y="1669" textLength="35" lengthAdjust="spacingAndGlyphs">Body21</text>
<text class="g2" x="124" y="1693" textLength="36" lengthAdjust="spacingAndGlyphs">Body22</text>
</g>
<rect x="52" y="1703" width="110" height="19" fill="#f3f3f3"/><use href="#tc" x="34" y="1707" width="6" height="11"/><use href="#eye" x="55" y="1707" width="15" height="11"/><use href="#fold" x="78" y="1706" width="16" height="13"/>
<text class="g2" x="107" y="1716" textLength="43" lengthAdjust="spacingAndGlyphs">Sketches</text>
</g>
</svg>
</body></html>
